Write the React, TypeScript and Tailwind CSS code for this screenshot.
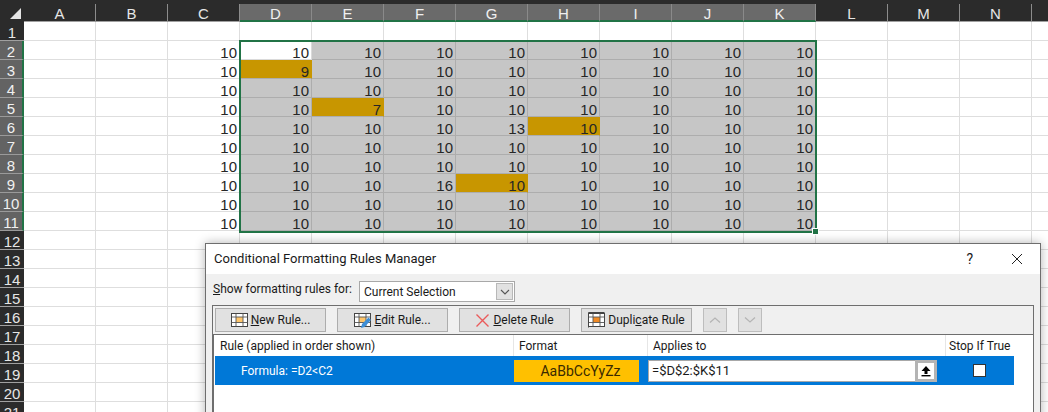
import React from "react";

const colLetters = ["A", "B", "C", "D", "E", "F", "G", "H", "I", "J", "K", "L", "M", "N", "O"];
const selCols = ["D", "E", "F", "G", "H", "I", "J", "K"];
const rows = Array.from({ length: 21 }, (_, i) => i + 1);

const overrides: Record<string, string> = { D3: "9", E5: "7", G6: "13", F9: "16" };
const amber = ["D3", "E5", "H6", "G9"];

function cellValue(col: string, row: number) {
  if (row < 2 || row > 11) return "";
  if (col === "C" || selCols.includes(col)) return overrides[col + row] ?? "10";
  return "";
}

function cellClass(col: string, row: number) {
  const id = col + row;
  const inSel = selCols.includes(col) && row >= 2 && row <= 11;
  if (amber.includes(id)) return "bg-[#c89600] border-[#c89600] border-b-[#adadad]";
  if (id === "D2") return "bg-white border-[#dadada]";
  if (inSel) return "bg-[#c6c6c6] border-[#adadad]";
  return "bg-white border-[#dedede]";
}

function Sheet() {
  return (
    <div className="grid grid-cols-[24px_repeat(15,72px)] grid-rows-[22px] auto-rows-[19px] font-['Liberation_Sans',sans-serif]">
      <div className="bg-[#2b2b2b] relative">
        <div className="absolute right-[3px] bottom-[3px] w-0 h-0 border-l-[11px] border-l-transparent border-b-[11px] border-b-[#e4e4e4]" />
      </div>
      {colLetters.map((c) => {
        const sel = selCols.includes(c);
        return (
          <div key={c} className="bg-[#2b2b2b] pt-[4px]">
            <div
              className={`h-[18px] border-r border-b text-center text-[15px] leading-[20px] ${
                sel ? "bg-[#6a6a6a] text-[#f0f0f0] border-r-[#8a8a8a] border-b-2 border-b-[#217346]" : "text-[#e6e6e6] border-r-[#8c8c8c] border-b-[#a0a0a0]"
              }`}
            >
              {c}
            </div>
          </div>
        );
      })}
      {rows.map((r) => {
        const sel = r >= 2 && r <= 11;
        return (
          <React.Fragment key={r}>
            <div
              className={`text-center text-[15px] leading-[22px] border-b overflow-hidden ${
                sel ? "bg-[#636363] text-[#f0f0f0] border-[#9a9a9a] border-r-2 border-r-[#217346]" : "bg-[#2b2b2b] text-[#e6e6e6] border-[#a0a0a0]"
              }`}
            >
              {r}
            </div>
            {colLetters.map((c) => (
              <div
                key={c}
                className={`border-r border-b text-right pr-[2px] text-[15px] leading-[23px] text-[#262626] overflow-hidden ${cellClass(c, r)}`}
              >
                {cellValue(c, r)}
              </div>
            ))}
          </React.Fragment>
        );
      })}
    </div>
  );
}

function GridIcon({ accent, pen, stacked }: { accent: string; pen?: boolean; stacked?: boolean }) {
  return (
    <svg width="17" height="16" viewBox="0 0 17 16" className="shrink-0">
      <rect x="0.5" y="1.5" width="16" height="13" fill="#fff" stroke="#444" />
      <rect x="5" y="5" width="7" height="5.5" fill={accent} />
      <path d="M0.5 5H16.5M0.5 10.5H16.5M5 1.5V14.5M12 1.5V14.5" stroke="#555" strokeWidth="0.9" fill="none" />
      {stacked && <path d="M0.5 15.5V0.5H16.5" stroke="#444" strokeWidth="1" fill="none" />}
      {pen && <path d="M7 16L8 12L14.5 5.5L17 8L10.5 15Z" fill="#3f8fd6" />}
    </svg>
  );
}

function DialogButton({ icon, width, children }: { icon: React.ReactNode; width: string; children: React.ReactNode }) {
  return (
    <div className={`${width} h-[24px] bg-[#e1e1e1] border border-[#adadad] flex items-center justify-center gap-[3px] text-[12px] text-[#1a1a1a] whitespace-nowrap`}>
      {icon}
      <span>{children}</span>
    </div>
  );
}

function ArrowButton({ up }: { up?: boolean }) {
  return (
    <div className="w-[24px] h-[24px] bg-[#e1e1e1] border border-[#bdbdbd] flex items-center justify-center">
      <svg width="12" height="8" viewBox="0 0 12 8">
        <path d={up ? "M1 6.5L6 2L11 6.5" : "M1 1.5L6 6L11 1.5"} stroke="#b4b4b4" strokeWidth="1.2" fill="none" />
      </svg>
    </div>
  );
}

function Dialog() {
  return (
    <div className="absolute left-[205px] top-[243px] w-[836px] h-[200px] bg-[#f0f0f0] border border-[#6e6e6e] shadow-[0_0_10px_rgba(0,0,0,0.3)] font-['Roboto',sans-serif] text-[#1a1a1a]">
      <div className="h-[30px] bg-white flex items-center pl-[8px] text-[13px]">
        <span className="flex-1">Conditional Formatting Rules Manager</span>
        <span className="mr-[38px] text-[14px]">?</span>
        <svg width="12" height="12" viewBox="0 0 12 12" className="mr-[17px]">
          <path d="M1 1L11 11M11 1L1 11" stroke="#222" strokeWidth="1" fill="none" />
        </svg>
      </div>
      <div className="h-[31px] pl-[7px] pt-[7px] flex items-start text-[12px]">
        <span className="w-[146px] leading-[16px] whitespace-nowrap">
          <u>S</u>how formatting rules for:
        </span>
        <div className="w-[156px] h-[21px] bg-white border border-[#a8a8a8] flex items-center pl-[4px]">
          <span className="flex-1">Current Selection</span>
          <div className="w-[17px] h-[17px] mr-[1px] bg-[#e1e1e1] border border-[#b8b8b8] flex items-center justify-center">
            <svg width="10" height="6" viewBox="0 0 10 6">
              <path d="M1 1L5 5L9 1" stroke="#555" strokeWidth="1.1" fill="none" />
            </svg>
          </div>
        </div>
      </div>
      <div className="ml-[6px] w-[822px] h-[140px] border border-[#6e6e6e]">
        <div className="h-[28px] flex items-center pl-[2px] gap-[11px]">
          <DialogButton width="w-[111px]" icon={<GridIcon accent="#ffc66b" />}>
            <u>N</u>ew Rule...
          </DialogButton>
          <DialogButton width="w-[111px]" icon={<GridIcon accent="#ffc66b" pen />}>
            <u>E</u>dit Rule...
          </DialogButton>
          <DialogButton
            width="w-[111px]"
            icon={
              <svg width="15" height="15" viewBox="0 0 15 15" className="shrink-0">
                <path d="M1.5 1.5L13.5 13.5M13.5 1.5L1.5 13.5" stroke="#ea5a5a" strokeWidth="1.4" fill="none" />
              </svg>
            }
          >
            <u>D</u>elete Rule
          </DialogButton>
          <DialogButton width="w-[111px]" icon={<GridIcon accent="#f08a24" stacked />}>
            Dupli<u>c</u>ate Rule
          </DialogButton>
          <ArrowButton up />
          <ArrowButton />
        </div>
        <div className="h-[110px] bg-white border-t border-l border-[#6e6e6e] pl-[1px] text-[12px]">
          <div className="h-[21px] w-[799px] flex items-center">
            <div className="w-[299px] h-full pl-[5px] pt-[2px] border-r border-[#e6e6e6]">Rule (applied in order shown)</div>
            <div className="w-[134px] h-full pl-[5px] pt-[2px] border-r border-[#e6e6e6]">Format</div>
            <div className="w-[298px] h-full pl-[5px] pt-[2px] border-r border-[#e6e6e6]">Applies to</div>
            <div className="flex-1 h-full pl-[3px] pt-[2px] whitespace-nowrap">Stop If True</div>
          </div>
          <div className="h-[29px] w-[799px] bg-[#0078d7] flex items-center">
            <div className="w-[299px] pl-[26px] text-white">Formula: =D2&lt;C2</div>
            <div className="w-[125px] h-[22px] bg-[#ffc000] pl-[8px] text-center leading-[22px] text-[14px] text-[#3a2a00]">AaBbCcYyZz</div>
            <div className="ml-[9px] w-[289px] h-[22px] bg-white border border-[#a8a8a8] flex items-center pl-[3px] text-[13px] text-[#1a1a1a]">
              <span className="flex-1">=$D$2:$K$11</span>
              <div className="w-[22px] h-[22px] -mr-px bg-white border-[3px] border-[#b4b4b4] flex items-center justify-center">
                <svg width="12" height="12" viewBox="0 0 12 12">
                  <path d="M6 1L10.5 6H7.5V9H4.5V6H1.5Z" fill="#000" />
                  <rect x="1.5" y="10" width="9" height="1.4" fill="#000" />
                </svg>
              </div>
            </div>
            <div className="ml-[36px] w-[13px] h-[13px] bg-white border border-[#333]" />
          </div>
        </div>
      </div>
    </div>
  );
}

export default function App() {
  return (
    <div className="relative w-[1048px] h-[412px] overflow-hidden bg-white">
      <Sheet />
      <div className="absolute left-[239px] top-[40px] w-[578px] h-[193px] border-2 border-[#217346]" />
      <div className="absolute left-[813px] top-[229px] w-[5px] h-[5px] bg-[#217346] outline outline-1 outline-white" />
      <Dialog />
    </div>
  );
}
